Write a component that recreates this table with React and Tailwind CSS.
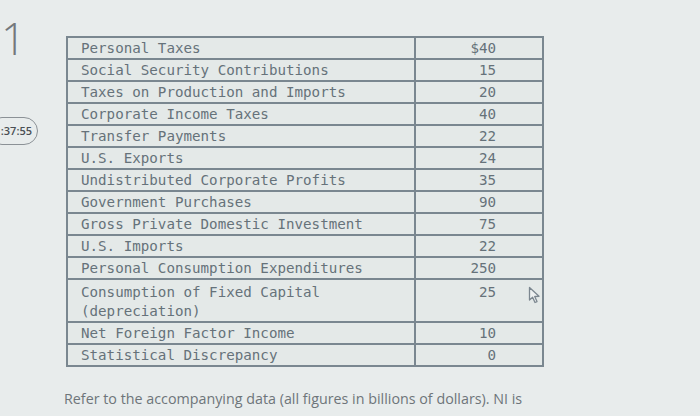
const rows = [
  { label: "Personal Taxes", value: "$40" },
  { label: "Social Security Contributions", value: "15" },
  { label: "Taxes on Production and Imports", value: "20" },
  { label: "Corporate Income Taxes", value: "40" },
  { label: "Transfer Payments", value: "22" },
  { label: "U.S. Exports", value: "24" },
  { label: "Undistributed Corporate Profits", value: "35" },
  { label: "Government Purchases", value: "90" },
  { label: "Gross Private Domestic Investment", value: "75" },
  { label: "U.S. Imports", value: "22" },
  { label: "Personal Consumption Expenditures", value: "250" },
  { label: "Consumption of Fixed Capital (depreciation)", value: "25", tall: true },
  { label: "Net Foreign Factor Income", value: "10" },
  { label: "Statistical Discrepancy", value: "0" },
];

const Cursor = () => (
  <svg width="14" height="18" viewBox="0 0 14 18" className="absolute left-[528px] top-[286px]">
    <path
      d="M1.5 1.5 L1.5 14 L4.6 11.2 L7 16.5 L9 15.6 L6.7 10.5 L11 10.3 Z"
      fill="#eef1f1"
      stroke="#7c8790"
      strokeWidth="1.3"
      strokeLinejoin="round"
    />
  </svg>
);

const App = () => {
  return (
    <div className="relative w-[700px] h-[416px] overflow-hidden bg-[#e8ecec] flex">
      <div className="w-[66px] shrink-0 flex flex-col">
        <div className="mt-[14px] ml-[1px] h-[48px] text-[44px] leading-[48px] font-light text-[#74787c] font-['Open_Sans',sans-serif]">
          1
        </div>
        <div className="mt-[55px] -ml-[12px] w-[50px] h-[28px] rounded-full border border-[#8b9196] flex items-center justify-end pr-[5px] text-[11px] font-semibold text-[#4a4f54] font-['Open_Sans',sans-serif]">
          :37:55
        </div>
      </div>
      <div className="flex flex-col pt-[36px]">
        <table className="w-[478px] border-collapse border-2 border-[#7a8790] font-['DejaVu_Sans_Mono',monospace] text-[14.2px] text-[#66727a]">
          <tbody>
            {rows.map((row) => (
              <tr key={row.label} className={row.tall ? "h-[42px]" : "h-[22px]"}>
                <td className={`w-[348px] border-2 border-[#7a8790] bg-[#e4e9e8] pl-[13px] leading-[19px] ${row.tall ? "align-top pt-[3px] pr-[90px]" : "align-middle"}`}>
                  {row.label}
                </td>
                <td className={`border-2 border-[#7a8790] bg-[#e4e9e8] text-right pr-[46px] leading-[19px] ${row.tall ? "align-top pt-[3px]" : "align-middle"}`}>
                  {row.value}
                </td>
              </tr>
            ))}
          </tbody>
        </table>
        <p className="mt-[22px] -ml-[2px] text-[14.3px] leading-[20px] text-[#6e757a] font-['Open_Sans',sans-serif]">
          Refer to the accompanying data (all figures in billions of dollars). NI is
        </p>
      </div>
      <Cursor />
    </div>
  );
};

export default App;
